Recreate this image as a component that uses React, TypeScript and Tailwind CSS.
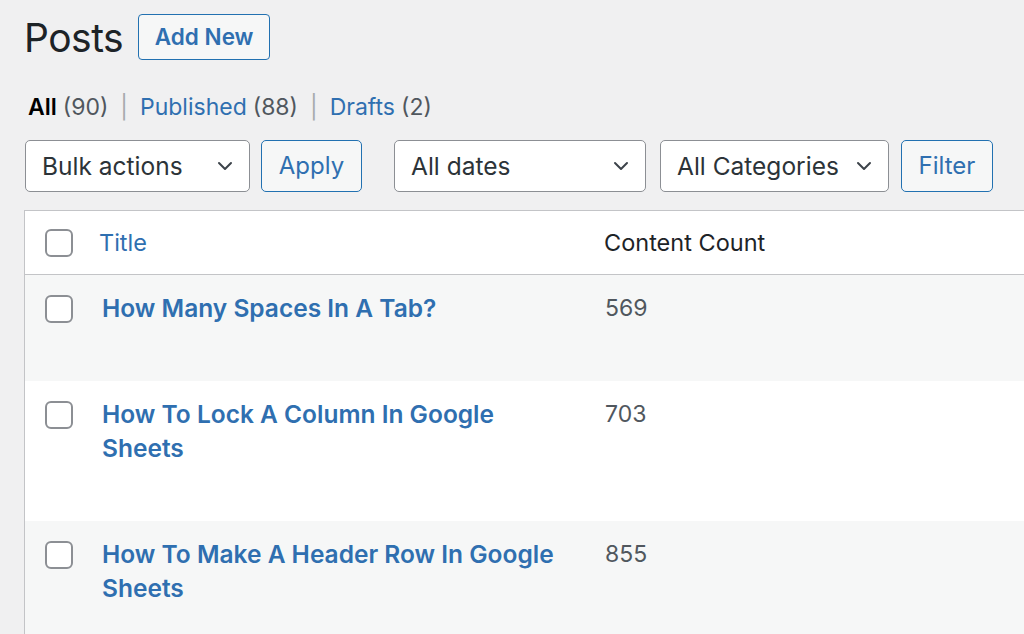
import React from "react";

const font = { fontFamily: "Inter, 'Noto Sans', Roboto, sans-serif" };

function Chevron() {
  return (
    <svg width="20" height="20" viewBox="0 0 20 20" fill="none">
      <path d="M4 7 L10 13 L16 7" stroke="#3c434a" strokeWidth="2" strokeLinecap="round" strokeLinejoin="round" />
    </svg>
  );
}

function Select({ label, w }: { label: string; w: string }) {
  return (
    <div className={`${w} h-[52px] flex items-center justify-between pl-[16px] pr-[14px] bg-white border border-[#8c8f94] rounded-[5px] text-[24.5px] text-[#2c3338]`}>
      <span>{label}</span>
      <Chevron />
    </div>
  );
}

function Btn({ label, w }: { label: string; w: string }) {
  return (
    <div className={`${w} h-[52px] flex items-center justify-center bg-[#f6f7f7] border border-[#2271b1] rounded-[5px] text-[24px] text-[#2f6fb0]`}>
      {label}
    </div>
  );
}

function Box() {
  return <div className="w-[28px] h-[28px] rounded-[6px] border-2 border-[#8c8f94] bg-white" />;
}

const rows = [
  { title: ["How Many Spaces In A Tab?"], count: "569", bg: "bg-[#f6f7f7]" },
  { title: ["How To Lock A Column In Google", "Sheets"], count: "703", bg: "bg-white" },
  { title: ["How To Make A Header Row In Google", "Sheets"], count: "855", bg: "bg-[#f6f7f7]" },
];

export default function App() {
  return (
    <div className="w-[1024px] h-[634px] overflow-hidden bg-[#f0f0f1]" style={font}>
      <div className="pl-[24px]">
        <div className="flex items-center gap-[15px] pt-[14px] h-[60px]">
          <h1 className="text-[39px] text-[#1d2327] leading-none tracking-[-0.5px]">Posts</h1>
          <div className="h-[46px] w-[132px] flex items-center justify-center border border-[#2271b1] rounded-[4px] bg-[#f6f7f7] text-[22.5px] font-semibold text-[#2f6fb0]">
            Add New
          </div>
        </div>
        <div className="mt-[32px] ml-[4px] flex items-center text-[23px] h-[30px] text-[#50575e]">
          <span className="font-semibold text-black">All</span>
          <span className="ml-[6px]">(90)</span>
          <span className="mx-[12px] text-[#a7aaad]">|</span>
          <span className="text-[#2f6fb0]">Published</span>
          <span className="ml-[6px]">(88)</span>
          <span className="mx-[12px] text-[#a7aaad]">|</span>
          <span className="text-[#2f6fb0]">Drafts</span>
          <span className="ml-[6px]">(2)</span>
        </div>
        <div className="mt-[18px] ml-[1px] flex items-center">
          <Select label="Bulk actions" w="w-[225px]" />
          <div className="ml-[11px]"><Btn label="Apply" w="w-[101px]" /></div>
          <div className="ml-[32px]"><Select label="All dates" w="w-[252px]" /></div>
          <div className="ml-[14px]"><Select label="All Categories" w="w-[229px]" /></div>
          <div className="ml-[12px]"><Btn label="Filter" w="w-[92px]" /></div>
        </div>
        <div className="mt-[18px] w-[1100px] border border-[#c3c4c7] bg-white">
          <div className="flex h-[64px] items-center border-b border-[#c3c4c7]">
            <div className="w-[74px] pl-[20px]"><Box /></div>
            <div className="w-[505px] text-[23.5px] text-[#2f6fb0]">Title</div>
            <div className="text-[23.5px] text-[#1d2327]">Content Count</div>
          </div>
          {rows.map((r, i) => (
            <div key={i} className={`flex ${r.bg}`}>
              <div className="w-[77px] pl-[20px] pt-[20px]"><Box /></div>
              <div className="w-[503px] pt-[16px] pb-[56px] text-[24.5px] leading-[34px] font-semibold text-[#2f6fb0]">
                {r.title.map((t, j) => <div key={j}>{t}</div>)}
              </div>
              <div className="pt-[16px] text-[23px] leading-[34px] text-[#50575e]">{r.count}</div>
            </div>
          ))}
        </div>
      </div>
    </div>
  );
}
